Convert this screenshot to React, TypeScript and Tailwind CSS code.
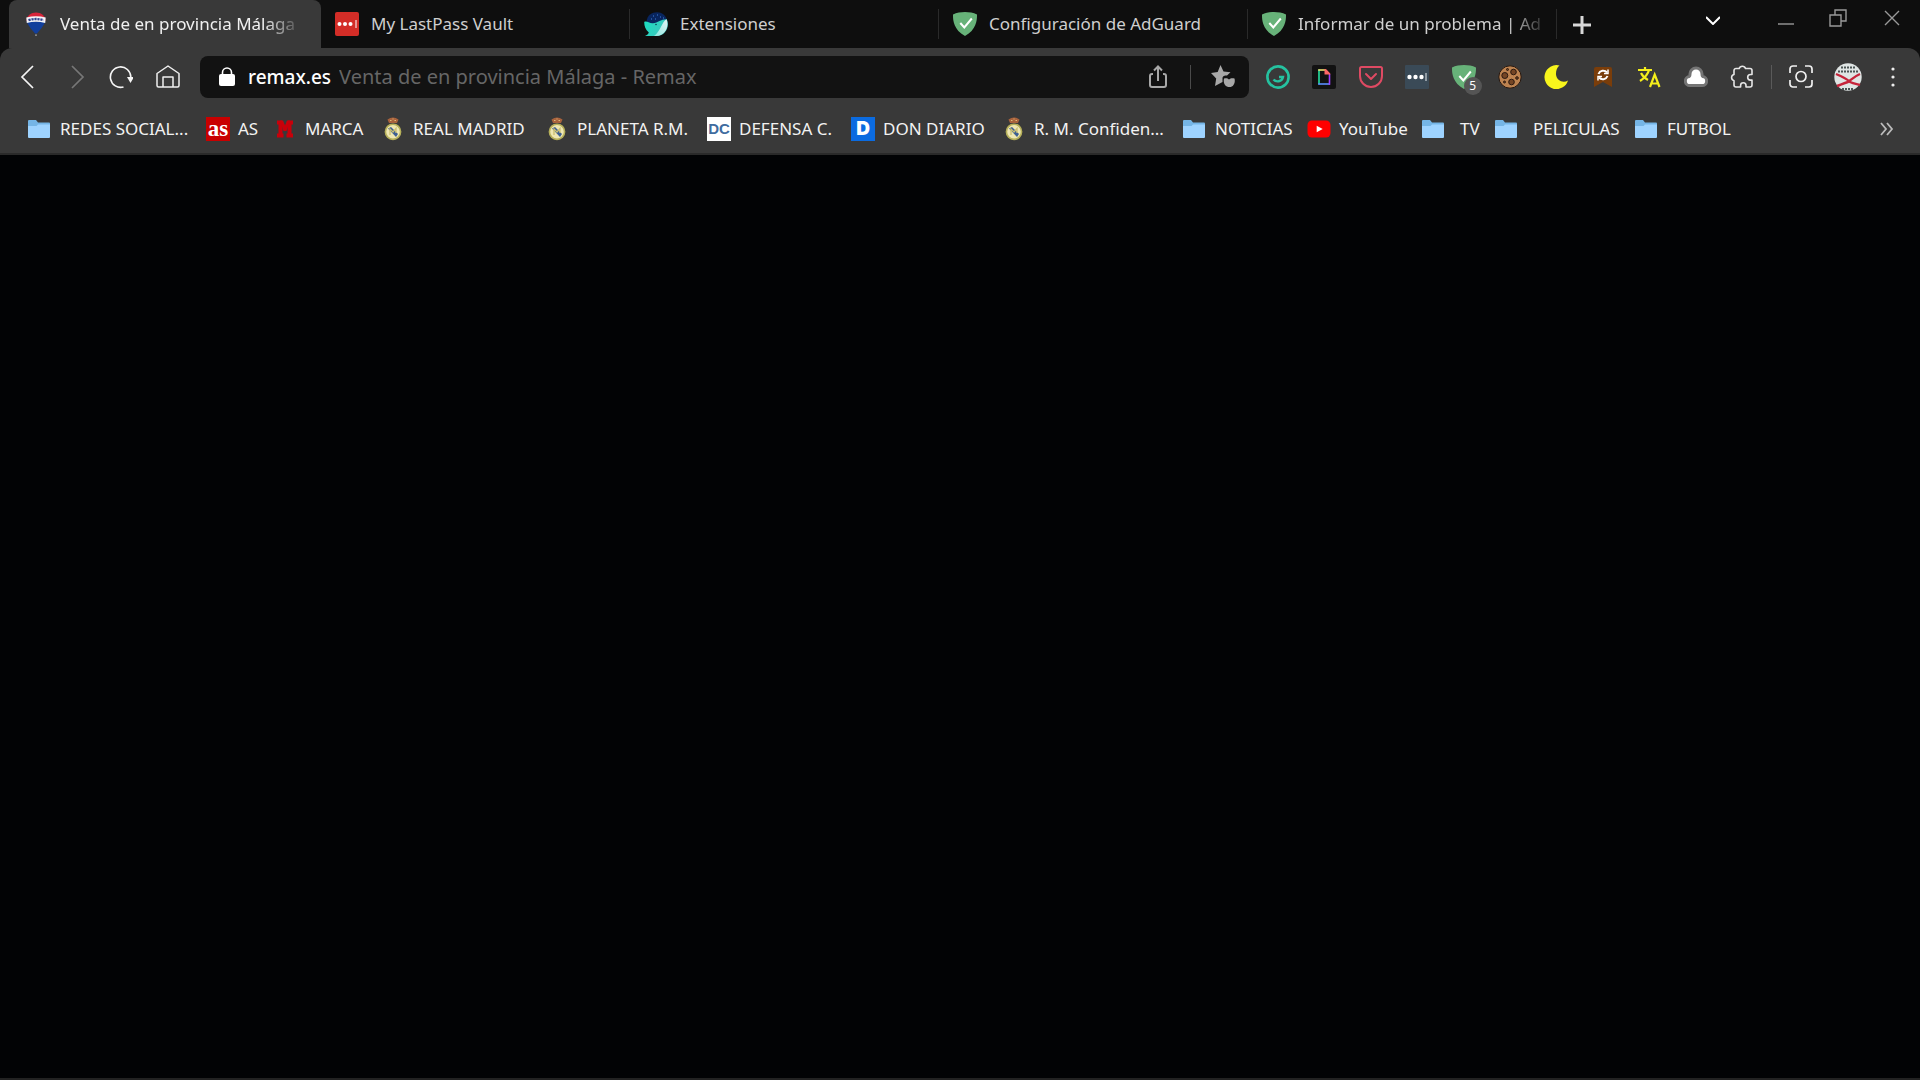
import type { ReactNode } from "react";

type Tab = { title: string; icon: ReactNode; active?: boolean; fade?: boolean };
type Bookmark = { label: string; icon: ReactNode; width: string; indent?: boolean };

function Remax() {
  return (
    <svg viewBox="0 0 24 24" className="size-6 shrink-0">
      <path d="M2.5 9C2.5 3.500 7 0.500 12 0.500S21.500 3.500 21.500 9z" fill="#d8243a" />
      <path d="M2.400 9.500C5 15 9 19 11 21.500h2C15 19 19 15 21.600 9.500z" fill="#123f9c" />
      <path d="M2.300 5.500Q12 3 21.700 5.500L21.200 11Q12 8.500 2.800 11z" fill="#f5f5f8" />
      <path d="M4.500 8.200Q12 5.800 19.500 8.200" fill="none" stroke="#33468f" strokeWidth="2.300" strokeDasharray="2.200 0.800" />
      <path d="M11 22.500h2v1.200h-2z" fill="#999" />
    </svg>
  );
}

function LastPass() {
  return (
    <svg viewBox="0 0 24 24" className="size-6 shrink-0">
      <rect width="24" height="24" rx="2" fill="#d32d27" />
      <circle cx="4.500" cy="12" r="2" fill="#fff" />
      <circle cx="10" cy="12" r="2" fill="#fff" />
      <circle cx="15.500" cy="12" r="2" fill="#fff" />
      <path d="M21 8v8" stroke="#fff" strokeWidth="1" />
    </svg>
  );
}

function Whale() {
  return (
    <svg viewBox="0 0 24 24" className="size-6 shrink-0">
      <defs>
        <linearGradient id="whale" x1="0" y1="0" x2="1" y2="0.400">
          <stop offset="0" stopColor="#18dfc0" />
          <stop offset="1" stopColor="#3fc4bd" />
        </linearGradient>
        <linearGradient id="belly" x1="0" y1="1" x2="1" y2="0">
          <stop offset="0" stopColor="#8be6de" />
          <stop offset="1" stopColor="#e4f3f4" />
        </linearGradient>
      </defs>
      <path d="M2.500 10C3 3 8 .2 13 .2c5 0 9 3.500 10.300 8.300L12 13z" fill="#08255e" />
      <path d="M.2 10c2.300-1.500 5 1.500 8.800 1.200C14 10.800 17 7 22.800 7.200 26 14 22 24 12 24H1c2-.8 3.500-2 3.800-3.500C1.500 18 .2 14 .2 10z" fill="url(#whale)" />
      <path d="M22.600 7.300C17.500 10 17 19 10 24h2.500c8 0 13-8.500 10.100-16.700z" fill="url(#belly)" />
      <circle cx="12" cy="12.500" r=".8" fill="#083b52" />
      <path d="M9 4h1M13 3h1M16 5h1M11 7h1M7 7h1M19 6h1" stroke="#3f7fd6" />
    </svg>
  );
}

function Shield() {
  return (
    <svg viewBox="0 0 24 24" className="size-6 shrink-0">
      <path d="M12 0C8 0 3.500.7 0 2.400 0 6.500-.4 17 12 24 24.400 17 24 6.500 24 2.400 20.500.7 16 0 12 0z" fill="#67b279" />
      <path d="M7.300 11l4 4.500 7.500-9" fill="none" stroke="#fff" strokeWidth="2" />
    </svg>
  );
}

function Folder() {
  return (
    <svg viewBox="0 0 24 24" className="size-6 shrink-0">
      <path d="M0 4a1 1 0 0 1 1-1h7l2 2.500h11a1 1 0 0 1 1 1V12H0z" fill="#75b5e6" />
      <path d="M0 9h8.500l1.500-1.500h12V20a1 1 0 0 1-1 1H1a1 1 0 0 1-1-1z" fill="#9ed3ff" />
    </svg>
  );
}

function Crest() {
  return (
    <svg viewBox="0 0 24 24" className="size-6 shrink-0">
      <path d="M8 6L6.500 2.500Q12-1.500 17.500 2.500L16 6z" fill="#a8623c" />
      <path d="M9 3.500h1.500M13.500 3.500H15M11.500 2h1" stroke="#dfb97a" />
      <circle cx="12" cy="14.800" r="7.600" fill="#efe7b2" stroke="#b6b05a" strokeWidth="1.600" />
      <path d="M7 11.500l3-1.500 7 7-2 3z" fill="#3d5f93" />
      <path d="M9 18V12l3 3 3-3.500V16" fill="none" stroke="#cbbf70" strokeWidth="1.300" />
    </svg>
  );
}

function As() {
  return (
    <span className="grid size-6 shrink-0 place-items-center overflow-hidden bg-[#c90000] font-['Liberation_Serif',serif] text-[23px] font-bold leading-6 text-white">
      <span className="pb-1">as</span>
    </span>
  );
}

function Marca() {
  return (
    <svg viewBox="0 0 24 24" className="size-6 shrink-0" fill="#c8000a">
      <path d="M4 3.500h5v4H4zM15 3.500h5v4h-5zM4 16.500h6.500v4H4zM13.500 16.500H20v4h-6.500zM5.500 4h4v16h-4zM14.500 4h4v16h-4z" />
      <path d="M7 3.500h3l2 5 2-5h3L13.500 14h-3z" />
    </svg>
  );
}

function Defensa() {
  return (
    <span className="grid size-6 shrink-0 place-items-center bg-white font-['Liberation_Sans',sans-serif] text-[15px] font-bold text-[#3f6c9f]">DC</span>
  );
}

function Diario() {
  return (
    <span className="grid size-6 shrink-0 place-items-center bg-[#0b6be0] font-['Inter',sans-serif] text-[19px] font-black text-white">D</span>
  );
}

function YouTube() {
  return (
    <svg viewBox="0 0 24 24" className="size-6 shrink-0">
      <rect x="0.500" y="3.500" width="23" height="17" rx="4.500" fill="#f00" />
      <path d="M9.700 8.800v6.400l6-3.200z" fill="#fff" />
    </svg>
  );
}

const tabs: Tab[] = [
  { title: "Venta de en provincia Málaga", icon: <Remax />, active: true, fade: true },
  { title: "My LastPass Vault", icon: <LastPass /> },
  { title: "Extensiones", icon: <Whale /> },
  { title: "Configuración de AdGuard", icon: <Shield /> },
  { title: "Informar de un problema | Ad", icon: <Shield />, fade: true },
];

const bookmarks: Bookmark[] = [
  { label: "REDES SOCIAL...", icon: <Folder />, width: "w-[178px]" },
  { label: "AS", icon: <As />, width: "w-[67px]" },
  { label: "MARCA", icon: <Marca />, width: "w-[108px]" },
  { label: "REAL MADRID", icon: <Crest />, width: "w-[164px]" },
  { label: "PLANETA R.M.", icon: <Crest />, width: "w-[162px]" },
  { label: "DEFENSA C.", icon: <Defensa />, width: "w-[144px]" },
  { label: "DON DIARIO", icon: <Diario />, width: "w-[151px]" },
  { label: "R. M. Confiden...", icon: <Crest />, width: "w-[181px]" },
  { label: "NOTICIAS", icon: <Folder />, width: "w-[124px]" },
  { label: "YouTube", icon: <YouTube />, width: "w-[115px]" },
  { label: "TV", icon: <Folder />, width: "w-[73px]", indent: true },
  { label: "PELICULAS", icon: <Folder />, width: "w-[140px]", indent: true },
  { label: "FUTBOL", icon: <Folder />, width: "w-[110px]" },
];

const extensions: { name: string; icon: ReactNode }[] = [
  {
    name: "Grammarly",
    icon: (
      <svg viewBox="0 0 24 24" className="size-6" fill="none" stroke="#25c2a0">
        <circle cx="12" cy="12" r="10.600" strokeWidth="2.600" />
        <path d="M7.500 14.500c2.500 3 8.500 2.500 9.500-2.500h-4" strokeWidth="2.400" />
      </svg>
    ),
  },
  {
    name: "Giphy",
    icon: (
      <svg viewBox="0 0 24 24" className="size-6" fill="none" strokeWidth="1.600">
        <rect width="24" height="24" rx="2" fill="#121212" />
        <path d="M7 4.500v15" stroke="#25e0a0" />
        <path d="M6.200 19H18" stroke="#5a8cff" />
        <path d="M17.500 19.800V9" stroke="#a040ff" />
        <path d="M6.200 5H13" stroke="#e8e070" />
        <path d="M12.500 4v5.500h5.800V8.500L14 4z" fill="#ff6666" />
      </svg>
    ),
  },
  {
    name: "Pocket",
    icon: (
      <svg viewBox="0 0 24 24" className="size-6" fill="none" stroke="#df4a63" strokeWidth="2" strokeLinecap="round" strokeLinejoin="round">
        <path d="M2.500 2h19a1.500 1.500 0 0 1 1.500 1.500V11a11 11 0 0 1-22 0V3.500A1.500 1.500 0 0 1 2.500 2z" />
        <path d="M7 9l5 5 5-5" />
      </svg>
    ),
  },
  {
    name: "LastPass",
    icon: (
      <svg viewBox="0 0 24 24" className="size-6">
        <rect width="24" height="24" rx="1" fill="#3a4a57" />
        <circle cx="4.500" cy="12" r="2.200" fill="#fff" />
        <circle cx="10.500" cy="12" r="2.200" fill="#fff" />
        <circle cx="16.500" cy="12" r="2.200" fill="#fff" />
        <path d="M21 8v8" stroke="#ccd3d8" strokeWidth="1.200" />
      </svg>
    ),
  },
  {
    name: "AdGuard",
    icon: (
      <span className="relative block">
        <Shield />
        <span className="absolute -right-1.5 -bottom-1.5 grid size-[18px] place-items-center rounded-full bg-[#555] text-[12px] text-white">5</span>
      </span>
    ),
  },
  {
    name: "Cookies",
    icon: (
      <svg viewBox="0 0 24 24" className="size-6">
        <circle cx="12" cy="12" r="11.200" fill="#bd8350" stroke="#241711" strokeWidth="1" />
        <g fill="#744524" stroke="#2b1a10" strokeWidth="1">
          <circle cx="6.800" cy="10.500" r="3" />
          <circle cx="15.500" cy="7" r="2.800" />
          <circle cx="13.500" cy="17" r="2.800" />
          <circle cx="19" cy="13" r="1.300" />
          <circle cx="9.500" cy="4.500" r="1" />
          <circle cx="6.500" cy="17" r="1" />
        </g>
      </svg>
    ),
  },
  {
    name: "Modo oscuro",
    icon: (
      <svg viewBox="0 0 24 24" className="size-6">
        <path d="M15.500.5A12 12 0 1 0 24 15.500C19 18.500 12.500 15.500 12 9.500 11.800 5.500 13 2.500 15.500.5z" fill="#f8f51c" />
      </svg>
    ),
  },
  {
    name: "Sincronizar marcadores",
    icon: (
      <svg viewBox="0 0 24 24" className="size-6">
        <path d="M3 4a2 2 0 0 1 2-2h14a2 2 0 0 1 2 2v18l-9-5-9 5z" fill="#7a3d0a" />
        <g fill="none" stroke="#fff" strokeWidth="2">
          <path d="M7.500 9A5 5 0 0 1 16 7.500M16.500 11A5 5 0 0 1 8 12.500" />
          <path d="M17 4.500V8.500H13M7 15.500v-4h4" strokeWidth="1.500" />
        </g>
      </svg>
    ),
  },
  {
    name: "Traductor",
    icon: (
      <svg viewBox="0 0 24 24" className="size-6" fill="none" stroke="#f4ee1b" strokeWidth="2.200">
        <path d="M1 5h14M8 2v3M3 16C7.500 13 11 9 12 5M4 8c1.500 3 4 5.500 7 7" />
        <path d="M13 22l4.700-12.500L22.500 22M14.500 18.500h6.500" />
      </svg>
    ),
  },
  {
    name: "Nube",
    icon: (
      <svg viewBox="0 0 24 24" className="size-6">
        <path d="M6 19.500h12a3.500 3.500 0 0 0 .3-7C17.500 12 17 11 17 9a5 5 0 0 0-10 0c0 2-.5 3-1.300 3.500a3.500 3.500 0 0 0 .3 7z" fill="#fff" stroke="#757575" strokeWidth="5" />
        <path d="M6 19h12a3 3 0 0 0 .3-6C17 12 16.500 11 16.500 9a4.500 4.500 0 0 0-9 0c0 2-.5 3-1.800 4a3 3 0 0 0 .3 6z" fill="#fff" />
      </svg>
    ),
  },
  {
    name: "Extensiones",
    icon: (
      <svg viewBox="0 0 24 24" className="size-6" fill="none" stroke="#e6e6e6" strokeWidth="1.600" strokeLinejoin="round">
        <path d="M6 3.500h3.200a3.300 3.300 0 0 1 6.300 0H20a2 2 0 0 1 2 2V9.500h-1.500a2.800 2.800 0 0 0 0 5.600H22V20a2 2 0 0 1-2 2h-4v-1.500a2.700 2.700 0 0 0-5.400 0V22H6a2 2 0 0 1-2-2v-4.300a3.200 3.200 0 0 1 0-6.200V5.500a2 2 0 0 1 2-2z" />
      </svg>
    ),
  },
];

function IconButton({ name, children }: { name: string; children: ReactNode }) {
  return (
    <button type="button" aria-label={name} className="grid h-10 w-[46px] place-items-center">
      {children}
    </button>
  );
}

function TabStrip() {
  return (
    <div className="flex h-12 items-stretch bg-[#0e0e0e] pl-[9px]">
      <div role="tablist" className="flex min-w-0 items-center">
        {tabs.map((tab) => (
          <button
            key={tab.title}
            type="button"
            role="tab"
            aria-selected={!!tab.active}
            className={
              tab.active
                ? "flex h-12 w-[312px] items-center gap-3 rounded-t-lg bg-[#393939] pl-[15px] pr-3 text-[#f0f0f0]"
                : "flex h-[30px] w-[309px] items-center gap-3 border-r border-[#2a2a2a] pl-[14px] pr-3 text-[#cfcfcf]"
            }
          >
            {tab.icon}
            <span
              className={
                tab.fade
                  ? "whitespace-nowrap text-[17px] leading-6 [mask-image:linear-gradient(to_right,#000_calc(100%-32px),rgba(0,0,0,0.2))]"
                  : "whitespace-nowrap text-[17px] leading-6"
              }
            >
              {tab.title}
            </span>
          </button>
        ))}
      </div>
      <button type="button" aria-label="Nueva pestaña" className="grid w-[50px] place-items-center pt-0.5">
        <svg viewBox="0 0 18 18" className="size-[18px]" fill="none" stroke="#d8d8d8" strokeWidth="3">
          <path d="M9 0v18M0 9h18" />
        </svg>
      </button>
      <div className="ml-auto flex h-9 items-center">
        <button type="button" aria-label="Buscar pestañas" className="mr-[21px] grid h-9 w-[53px] place-items-center pt-1">
          <svg viewBox="0 0 14 9" className="h-[9px] w-[14px]" fill="none" stroke="#fff" strokeWidth="2">
            <path d="M0 1l7 7 7-7" />
          </svg>
        </button>
        <button type="button" aria-label="Minimizar" className="grid h-9 w-[52px] place-items-center pt-3">
          <svg viewBox="0 0 16 2" className="h-0.5 w-4" stroke="#999" strokeWidth="1.400">
            <path d="M0 1h16" />
          </svg>
        </button>
        <button type="button" aria-label="Restaurar" className="grid h-9 w-[52px] place-items-center">
          <svg viewBox="0 0 18 18" className="size-[18px]" fill="none" stroke="#999" strokeWidth="1.400">
            <path d="M1 6h11v11H1zM6 6V1h11v11h-5" />
          </svg>
        </button>
        <button type="button" aria-label="Cerrar" className="grid h-9 w-14 place-items-center">
          <svg viewBox="0 0 16 16" className="size-4" fill="none" stroke="#999" strokeWidth="1.400">
            <path d="M1 1l14 14M15 1L1 15" />
          </svg>
        </button>
      </div>
    </div>
  );
}

function Toolbar() {
  return (
    <div className="flex h-14 items-center pl-1 pt-0.5">
      <div className="flex gap-px">
        <IconButton name="Atrás">
          <svg viewBox="0 0 24 24" className="size-6" fill="none" stroke="#f5f5f5" strokeWidth="1.700">
            <path d="M18 1L7 12l11 11" />
          </svg>
        </IconButton>
        <IconButton name="Adelante">
          <svg viewBox="0 0 24 24" className="size-6" fill="none" stroke="#777" strokeWidth="1.700">
            <path d="M10 1l11 11-11 11" />
          </svg>
        </IconButton>
        <IconButton name="Recargar">
          <svg viewBox="0 0 24 24" className="size-6" fill="none" stroke="#f5f5f5" strokeWidth="1.600">
            <path d="M14.500 21.900A10.200 10.200 0 1 1 21.800 12" />
            <path d="M18 12h7l-3.500 6z" fill="#f5f5f5" stroke="none" />
          </svg>
        </IconButton>
        <IconButton name="Inicio">
          <svg viewBox="0 0 24 24" className="size-6" fill="none" stroke="#f0f0f0" strokeWidth="1.500" strokeLinejoin="round">
            <path d="M1 8.500L12 1l11 7.500V20.500a1.500 1.500 0 0 1-1.500 1.500h-19A1.500 1.500 0 0 1 1 20.500zM7 22V12h10v10" />
          </svg>
        </IconButton>
      </div>
      <div className="ml-[9px] flex h-[42px] min-w-0 flex-1 items-center rounded-lg bg-[#121212] pl-[18px] pr-[14px]">
        <svg viewBox="0 0 18 20" className="h-5 w-[18px] shrink-0">
          <rect x="1" y="7" width="16" height="12" rx="2" fill="#fff" />
          <path d="M4.500 8V5.500a4.500 4.500 0 0 1 9 0V8" fill="none" stroke="#fff" strokeWidth="1.600" />
        </svg>
        <input
          aria-label="Dirección"
          defaultValue="remax.es"
          className="ml-3 field-sizing-content bg-transparent text-[19px] font-medium leading-7 text-white outline-none"
        />
        <span className="ml-2 min-w-0 flex-1 truncate text-[20px] leading-7 text-[#666]">Venta de en provincia Málaga - Remax</span>
        <button type="button" aria-label="Compartir" className="grid size-6 place-items-center">
          <svg viewBox="0 0 24 24" className="size-6" fill="none" stroke="#a8a8a8" strokeWidth="2">
            <path d="M7 9H6a2 2 0 0 0-2 2v9a2 2 0 0 0 2 2h12a2 2 0 0 0 2-2v-9a2 2 0 0 0-2-2h-1M12 16V2M8 5.500l4-4 4 4" />
          </svg>
        </button>
        <span className="mx-5 h-6 w-px bg-[#4a4a4a]" />
        <button type="button" aria-label="Añadir a marcadores" className="grid size-6 place-items-center">
          <svg viewBox="0 0 24 24" className="size-6" fill="#a8a8a8">
            <path d="M9.500 0l3 6.500 7 .8-3.500 3.300c-2-.6-4.500 0-4.500 2.500v4L4 21l1.200-7.500L0 8l6.700-1z" />
            <path d="M13 13.500c3-.6 3.500 0 5 1 1.500-1 2.500-1.500 5.500-1 1 3.500-.5 8.500-5 8.500s-6.500-4-5.500-8.500z" />
          </svg>
        </button>
      </div>
      <div className="ml-[17px] flex w-[488px] shrink-0 items-center justify-between">
        {extensions.map((ext) => (
          <button key={ext.name} type="button" aria-label={ext.name} className="size-6">
            {ext.icon}
          </button>
        ))}
      </div>
      <span className="ml-[17px] h-6 w-px bg-[#5a5a5a]" />
      <button type="button" aria-label="Capturar" className="ml-[17px] size-6">
        <svg viewBox="0 0 24 24" className="size-6" fill="none" stroke="#f0f0f0" strokeWidth="1.700">
          <path d="M1 8V4a3 3 0 0 1 3-3h4M16 1h4a3 3 0 0 1 3 3v4M23 15v4a3 3 0 0 1-3 3h-4M8 22H4a3 3 0 0 1-3-3v-4" />
          <circle cx="12" cy="11.500" r="5" />
        </svg>
      </button>
      <button type="button" aria-label="Perfil" className="ml-[21px] size-7">
        <svg viewBox="0 0 28 28" className="size-7">
          <circle cx="14" cy="14" r="13.700" fill="#dfe5e4" />
          <path d="M7 4.500h14M4 8.500h20M8 26h12" stroke="#4b5554" strokeWidth="1.800" strokeDasharray="2 1" />
          <path d="M2 11c5 2 10 4 14 8 4 2 7 2 10 3M26 11c-5 2-8 5-12 8-4 1-8 3-11 4" fill="none" stroke="#c5243a" strokeWidth="2.400" />
        </svg>
      </button>
      <button type="button" aria-label="Menú" className="ml-[19px] mr-[15px] grid size-6 place-items-center">
        <svg viewBox="0 0 4 20" className="h-5 w-1" fill="#eee">
          <circle cx="2" cy="2" r="1.600" />
          <circle cx="2" cy="10" r="1.600" />
          <circle cx="2" cy="18" r="1.600" />
        </svg>
      </button>
    </div>
  );
}

function BookmarksBar() {
  return (
    <nav aria-label="Marcadores" className="flex h-[49px] items-center pl-7 pr-[26px]">
      {bookmarks.map((b) => (
        <a key={b.label} href="#" className={"flex shrink-0 items-center whitespace-nowrap text-[17px] leading-6 text-[#f2f2f2] " + b.width}>
          {b.icon}
          <span className={b.indent ? "ml-[14px]" : "ml-2"}>{b.label}</span>
        </a>
      ))}
      <button type="button" aria-label="Más marcadores" className="ml-auto">
        <svg viewBox="0 0 14 14" className="size-[14px]" fill="none" stroke="#bbb" strokeWidth="1.800">
          <path d="M1 1l5 6-5 6M7 1l5 6-5 6" />
        </svg>
      </button>
    </nav>
  );
}

export default function App() {
  return (
    <div className="flex min-h-screen flex-col bg-[#0e0e0e] font-['Noto_Sans',sans-serif]">
      <header>
        <TabStrip />
        <div className="rounded-t-xl border-b-2 border-[#2a2a2a] bg-[#393939]">
          <Toolbar />
          <BookmarksBar />
        </div>
      </header>
      <main className="flex-1 border-b-2 border-[#222] bg-[#020305]" />
    </div>
  );
}
